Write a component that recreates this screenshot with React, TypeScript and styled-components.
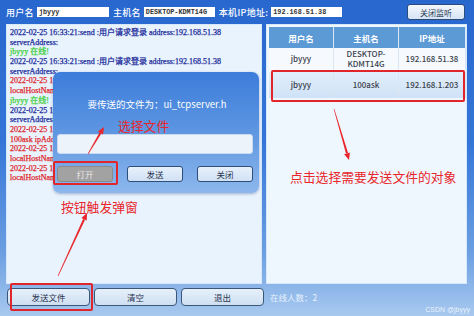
import React from 'react';
import styled, { createGlobalStyle } from 'styled-components';

type LogLine = { text: string; tone: 'blue' | 'red' | 'green' };

const logs: LogLine[] = [
  { text: '2022-02-25 16:33:21:send :用户请求登录  address:192.168.51.38', tone: 'blue' },
  { text: 'serverAddress:', tone: 'blue' },
  { text: 'jbyyy 在线!', tone: 'green' },
  { text: '2022-02-25 16:33:21:send :用户请求登录  address:192.168.51.38', tone: 'blue' },
  { text: 'serverAddress:', tone: 'blue' },
  { text: '2022-02-25 16:33:21:send :用户请求登录', tone: 'red' },
  { text: 'localHostName:', tone: 'red' },
  { text: 'jbyyy 在线!', tone: 'green' },
  { text: '2022-02-25 16:33:21:send :用户请求登录', tone: 'blue' },
  { text: 'serverAddress:', tone: 'blue' },
  { text: '2022-02-25 16:33:21:send :用户请求登录', tone: 'red' },
  { text: '100ask  ipAddress:192.168.1.203', tone: 'red' },
  { text: '2022-02-25 16:33:21:send :用户请求登录', tone: 'red' },
  { text: 'localHostName:', tone: 'red' },
  { text: '2022-02-25 16:33:21:send :用户请求登录', tone: 'red' },
  { text: 'localHostName:', tone: 'red' },
];

const toneColor = { blue: '#1d2c9a', red: '#e0282c', green: '#3fcf3a' };

const Global = createGlobalStyle`
  body { margin: 0; background: #fff; }
`;

const Window = styled.div`
  position: relative;
  width: 474px;
  height: 316px;
  overflow: hidden;
  display: flex;
  flex-direction: column;
  background: linear-gradient(180deg, #2867ce 0%, #3476d8 45%, #6c9fe2 80%, #a8c9ef 100%);
  font-family: "Liberation Serif", "Noto Sans CJK SC", serif;
`;

const TopBar = styled.div`
  height: 24px;
  display: flex;
  align-items: center;
  padding: 0 9px 0 6px;
`;

const Field = styled.div`
  display: flex;
  align-items: center;
  gap: 3px;
  margin-right: 4px;
`;

const Label = styled.span`
  color: #fff;
  font-family: "Noto Sans CJK SC", sans-serif;
  font-weight: 500;
  font-size: 9px;
  letter-spacing: 0.3px;
`;

const TextBox = styled.div<{ $w: number }>`
  width: ${p => p.$w}px;
  height: 10px;
  background: #fff;
  padding-left: 2px;
  box-sizing: border-box;
  font-family: "Liberation Mono", monospace;
  font-size: 6.8px;
  font-weight: 700;
  line-height: 10px;
  color: #333;
  white-space: nowrap;
`;

const TopButton = styled.button`
  margin-left: auto;
  width: 58px;
  height: 16px;
  padding: 0;
  border: 1px solid #2b4c78;
  border-radius: 3px;
  background: linear-gradient(180deg, #f4f8fd 0%, #d6e4f5 100%);
  font-family: "Noto Sans CJK SC", sans-serif;
  font-size: 8px;
  color: #2a3a55;
`;

const Main = styled.div`
  height: 260px;
  display: flex;
  gap: 4px;
  padding: 0 7px 0 6px;
`;

const LogPanel = styled.div`
  width: 256px;
  background: #e8f3fe;
  border: 1px solid #d6e8fb;
  box-sizing: border-box;
  padding: 3px 0 0 3px;
  overflow: hidden;
`;

const LogRow = styled.div<{ $tone: LogLine['tone'] }>`
  height: 9.7px;
  line-height: 9.7px;
  font-size: 8px;
  white-space: nowrap;
  color: ${p => toneColor[p.$tone]};
  -webkit-text-stroke: 0.25px ${p => toneColor[p.$tone]};
`;

const RightPanel = styled.div`
  flex: 1;
  background: #eef6fe;
  border: 1px solid #d6e8fb;
  box-sizing: border-box;
  padding: 2px 0 0 2px;
`;

const Table = styled.div`
  display: grid;
  grid-template-columns: 65px 65px 67px;
  font-family: "Noto Sans CJK SC", sans-serif;
`;

const HeadCell = styled.div`
  height: 21px;
  display: flex;
  align-items: center;
  justify-content: center;
  background: #5c9ad6;
  border-right: 1px solid #dbe9f7;
  color: #fff;
  font-size: 8.5px;
  font-weight: 700;
  &:last-child { border-right: none; }
`;

const Cell = styled.div<{ $h: number; $selected?: boolean }>`
  height: ${p => p.$h}px;
  display: flex;
  align-items: center;
  justify-content: center;
  text-align: center;
  color: #3a3f4a;
  font-size: 8px;
  font-weight: 500;
  line-height: 10px;
  border-right: 1px solid #dbe6f2;
  background: ${p => (p.$selected ? 'linear-gradient(180deg, #e2eefb 0%, #cfe2f6 100%)' : '#f6faff')};
  margin: ${p => (p.$selected ? '2px 0 4px' : '0')};
`;

const BottomBar = styled.div`
  flex: 1;
  display: flex;
  align-items: center;
  gap: 4px;
  padding: 0 0 6px 7px;
`;

const BottomButton = styled.button`
  width: 83px;
  height: 18px;
  padding: 0;
  border: 1px solid #3a5778;
  border-radius: 4px;
  background: linear-gradient(180deg, #e6f0fb 0%, #cfdff2 100%);
  font-family: "Liberation Serif", "Noto Sans CJK SC", serif;
  font-size: 8.5px;
  color: #2a3550;
`;

const Online = styled.span`
  margin-left: 2px;
  color: #e8f1fc;
  font-size: 8.5px;
  font-family: "Noto Sans CJK SC", sans-serif;
`;

const Watermark = styled.span`
  position: absolute;
  right: 4px;
  bottom: 3px;
  color: rgba(255, 255, 255, 0.8);
  font-family: "Liberation Sans", sans-serif;
  font-size: 7px;
`;

const Dialog = styled.div`
  position: absolute;
  left: 53px;
  top: 72px;
  width: 206px;
  height: 121px;
  box-sizing: border-box;
  padding: 26px 6px 0 4px;
  border-radius: 7px;
  background: linear-gradient(180deg, #3c7ddb 0%, #5a93e0 45%, #8db7ec 100%);
  box-shadow: 0 1px 3px rgba(20, 50, 110, 0.35);
  display: flex;
  flex-direction: column;
`;

const DialogTitle = styled.div`
  height: 12px;
  line-height: 12px;
  text-align: center;
  color: #fff;
  font-family: "Noto Sans CJK SC", sans-serif;
  font-size: 9.5px;
  padding-left: 4px;
`;

const DialogInput = styled.div`
  margin-top: 24px;
  height: 20px;
  border-radius: 3px;
  background: #edf3fa;
  border: 1px solid #c9daef;
  box-sizing: border-box;
`;

const DialogButtons = styled.div`
  margin-top: 12px;
  display: flex;
  justify-content: space-between;
`;

const DialogButton = styled.button<{ $disabled?: boolean }>`
  width: 56px;
  height: 16px;
  padding: 0;
  border-radius: 3px;
  border: 1px solid ${p => (p.$disabled ? '#8a8a8a' : '#2d4e78')};
  background: ${p => (p.$disabled ? '#a2a2a2' : 'linear-gradient(180deg, #e8f1fb 0%, #d0e1f4 100%)')};
  color: ${p => (p.$disabled ? '#e6e6e6' : '#2a3550')};
  font-family: "Liberation Serif", "Noto Sans CJK SC", serif;
  font-size: 8.5px;
`;

const Note = styled.span<{ $x: number; $y: number }>`
  position: absolute;
  left: ${p => p.$x}px;
  top: ${p => p.$y}px;
  color: #e8262b;
  font-family: "Noto Sans CJK SC", sans-serif;
  font-size: 12.8px;
  line-height: 16px;
  white-space: nowrap;
`;

const Mark = styled.div<{ $x: number; $y: number; $w: number; $h: number }>`
  position: absolute;
  left: ${p => p.$x}px;
  top: ${p => p.$y}px;
  width: ${p => p.$w}px;
  height: ${p => p.$h}px;
  box-sizing: border-box;
  border: 2px solid #e0262b;
  border-radius: 2px;
`;

const Overlay = styled.svg`
  position: absolute;
  left: 0;
  top: 0;
  pointer-events: none;
`;

const Arrow = ({ x1, y1, x2, y2 }: { x1: number; y1: number; x2: number; y2: number }) => {
  const dx = x2 - x1;
  const dy = y2 - y1;
  const len = Math.hypot(dx, dy);
  const ux = dx / len;
  const uy = dy / len;
  const nx = -uy;
  const ny = ux;
  const hl = 7;
  const hw = 3;
  const bx = x2 - ux * hl;
  const by = y2 - uy * hl;
  const shaft = `${x1 + nx * 0.3},${y1 + ny * 0.3} ${bx + nx * 1.1},${by + ny * 1.1} ${bx - nx * 1.1},${by - ny * 1.1} ${x1 - nx * 0.3},${y1 - ny * 0.3}`;
  const head = `${x2},${y2} ${bx + nx * hw},${by + ny * hw} ${bx - nx * hw},${by - ny * hw}`;
  return (
    <g fill="#e8262b">
      <polygon points={shaft} />
      <polygon points={head} />
    </g>
  );
};

export default function App() {
  return (
    <>
      <Global />
      <Window>
        <TopBar>
          <Field>
            <Label>用户名</Label>
            <TextBox $w={72}>jbyyy</TextBox>
          </Field>
          <Field>
            <Label>主机名</Label>
            <TextBox $w={71}>DESKTOP-KDMT14G</TextBox>
          </Field>
          <Field>
            <Label>本机IP地址:</Label>
            <TextBox $w={71}>192.168.51.38</TextBox>
          </Field>
          <TopButton>关闭监听</TopButton>
        </TopBar>

        <Main>
          <LogPanel>
            {logs.map((l, i) => (
              <LogRow key={i} $tone={l.tone}>{l.text}</LogRow>
            ))}
          </LogPanel>
          <RightPanel>
            <Table>
              <HeadCell>用户名</HeadCell>
              <HeadCell>主机名</HeadCell>
              <HeadCell>IP地址</HeadCell>
              <Cell $h={22}>jbyyy</Cell>
              <Cell $h={22}>DESKTOP-<br />KDMT14G</Cell>
              <Cell $h={22}>192.168.51.38</Cell>
              <Cell $h={26} $selected>jbyyy</Cell>
              <Cell $h={26} $selected>100ask</Cell>
              <Cell $h={26} $selected>192.168.1.203</Cell>
            </Table>
          </RightPanel>
        </Main>

        <BottomBar>
          <BottomButton>发送文件</BottomButton>
          <BottomButton>清空</BottomButton>
          <BottomButton>退出</BottomButton>
          <Online>在线人数：2</Online>
        </BottomBar>
        <Watermark>CSDN @jbyyy</Watermark>

        <Dialog>
          <DialogTitle>要传送的文件为：ui_tcpserver.h</DialogTitle>
          <DialogInput />
          <DialogButtons>
            <DialogButton $disabled>打开</DialogButton>
            <DialogButton>发送</DialogButton>
            <DialogButton>关闭</DialogButton>
          </DialogButtons>
        </Dialog>

        <Mark $x={53} $y={161} $w={65} $h={24} />
        <Mark $x={271} $y={70} $w={194} $h={32} />
        <Mark $x={10} $y={283} $w={83} $h={28} />

        <Note $x={118} $y={118}>选择文件</Note>
        <Note $x={61} $y={199}>按钮触发弹窗</Note>
        <Note $x={290} $y={169}>点击选择需要发送文件的对象</Note>

        <Overlay width={474} height={316}>
          <Arrow x1={88} y1={154} x2={104} y2={127} />
          <Arrow x1={58} y1={276} x2={87} y2={213} />
          <Arrow x1={334} y1={109} x2={349} y2={160} />
        </Overlay>
      </Window>
    </>
  );
}
